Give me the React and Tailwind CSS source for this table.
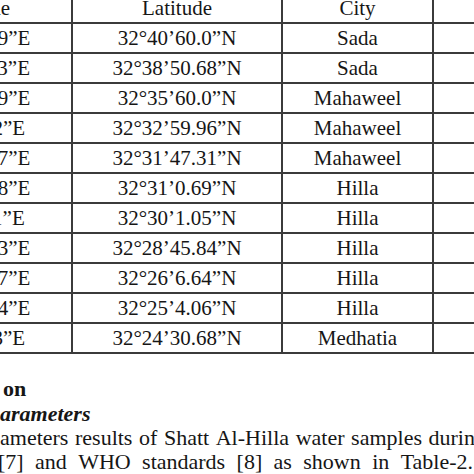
import React from "react";

const rows = [
  ["44°24’25.69”E", "32°40’60.0”N", "Sada"],
  ["44°25’11.43”E", "32°38’50.68”N", "Sada"],
  ["44°25’35.19”E", "32°35’60.0”N", "Mahaweel"],
  ["44°25’9.72”E", "32°32’59.96”N", "Mahaweel"],
  ["44°25’28.17”E", "32°31’47.31”N", "Mahaweel"],
  ["44°25’37.08”E", "32°31’0.69”N", "Hilla"],
  ["44°25’9.11”E", "32°30’1.05”N", "Hilla"],
  ["44°26’12.23”E", "32°28’45.84”N", "Hilla"],
  ["44°26’30.57”E", "32°26’6.64”N", "Hilla"],
  ["44°26’41.04”E", "32°25’4.06”N", "Hilla"],
  ["44°27’2.83”E", "32°24’30.68”N", "Medhatia"],
];

function Row({ cells }) {
  return (
    <div className="grid grid-cols-[210px_210px_151px_109px] h-[30px] border-b-2 border-[#3b3b3b]">
      {cells.map((c, i) => (
        <div
          key={i}
          className="h-[28px] leading-[28px] text-center whitespace-nowrap border-r-2 border-[#3b3b3b]"
        >
          {c}
        </div>
      ))}
    </div>
  );
}

const line3 = ["ameters", "results", "of", "Shatt", "Al-Hilla", "water", "samples", "during"];
const line4 = ["[7]", "and", "WHO", "standards", "[8]", "as", "shown", "in", "Table-2."];

export default function App() {
  return (
    <div className="w-[474px] h-[474px] overflow-hidden bg-white text-[#161616] font-['Liberation_Serif','Times_New_Roman',serif]">
      <div className="ml-[-137px] mt-[-6px] w-[680px] text-[21px]">
        <Row cells={["Longitude", "Latitude", "City", ""]} />
        {rows.map((r, i) => (
          <Row key={i} cells={[...r, ""]} />
        ))}
      </div>
      <div className="mt-[23.4px] text-[22px] leading-[24.33px]">
        <div className="font-bold pl-[3px]">on</div>
        <div className="font-bold italic">arameters</div>
        <div className="flex justify-between w-[486px] whitespace-nowrap">
          {line3.map((w, i) => (
            <span key={i}>{w}</span>
          ))}
        </div>
        <div className="flex justify-between w-[475px] ml-[-2px] whitespace-nowrap">
          {line4.map((w, i) => (
            <span key={i}>{w}</span>
          ))}
        </div>
      </div>
    </div>
  );
}
